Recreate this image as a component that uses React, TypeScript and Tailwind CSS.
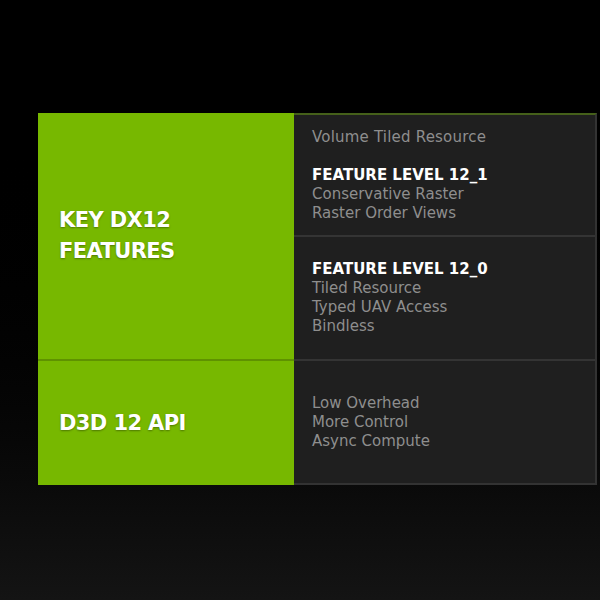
export default function App() {
  const font = { fontFamily: '"DejaVu Sans", Verdana, sans-serif' };

  return (
    <div
      className="w-[600px] h-[600px] bg-gradient-to-b from-black from-20% to-[#141414] pt-[113px] pl-[38px] pr-[3px]"
      style={font}
    >
      <div className="flex h-[372px]">
        {/* Green label column */}
        <div className="w-[256px] flex flex-col bg-[#77b800]">
          <div className="h-[248px] flex items-center px-[21px] border-b-2 border-[#5f9200]">
            <h2 className="text-white font-bold text-[21px] leading-[31px] tracking-[-0.6px] [text-shadow:0_1px_2px_rgba(0,0,0,0.35)]">
              KEY DX12
              <br />
              FEATURES
            </h2>
          </div>
          <div className="flex-1 flex items-center px-[21px]">
            <h2 className="text-white font-bold text-[21px] leading-[31px] tracking-[-0.6px] [text-shadow:0_1px_2px_rgba(0,0,0,0.35)]">
              D3D 12 API
            </h2>
          </div>
        </div>

        {/* Dark detail column */}
        <div className="flex-1 flex flex-col bg-[#1f1f1f] border-t-2 border-t-[#45601a] border-r-2 border-r-[#333333] border-b-2 border-b-[#333333]">
          <div className="h-[122px] flex flex-col justify-center pl-[18px] text-[15px] leading-[19px] text-[#8e8e8e] border-b-2 border-[#343434]">
            <p className="tracking-[0.2px]">Volume Tiled Resource</p>
            <p className="mt-[19px] text-white font-bold">FEATURE LEVEL 12_1</p>
            <p>Conservative Raster</p>
            <p>Raster Order Views</p>
          </div>
          <div className="h-[124px] flex flex-col justify-center pl-[18px] text-[15px] leading-[19px] text-[#8e8e8e] border-b-2 border-[#343434]">
            <p className="text-white font-bold">FEATURE LEVEL 12_0</p>
            <p>Tiled Resource</p>
            <p>Typed UAV Access</p>
            <p>Bindless</p>
          </div>
          <div className="flex-1 flex flex-col justify-center pl-[18px] text-[15px] leading-[19px] text-[#8e8e8e]">
            <p>Low Overhead</p>
            <p>More Control</p>
            <p>Async Compute</p>
          </div>
        </div>
      </div>
    </div>
  );
}
